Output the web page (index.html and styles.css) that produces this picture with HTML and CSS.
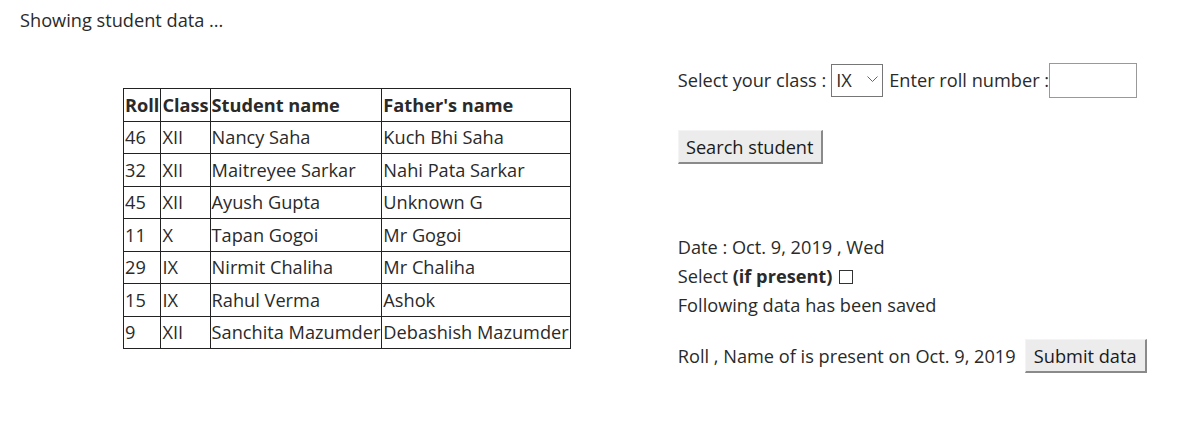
FILE: index.html
```html
<!DOCTYPE html>
<html>
<head>
<meta charset="utf-8">
<link rel="stylesheet" href="styles.css">
</head>
<body>
<p class="intro">Showing student data ...</p>
<div class="main">
  <table class="students">
    <thead>
      <tr><th>Roll</th><th>Class</th><th>Student name</th><th>Father's name</th></tr>
    </thead>
    <tbody>
      <tr><td>46</td><td>XII</td><td>Nancy Saha</td><td>Kuch Bhi Saha</td></tr>
      <tr><td>32</td><td>XII</td><td>Maitreyee Sarkar</td><td>Nahi Pata Sarkar</td></tr>
      <tr><td>45</td><td>XII</td><td>Ayush Gupta</td><td>Unknown G</td></tr>
      <tr><td>11</td><td>X</td><td>Tapan Gogoi</td><td>Mr Gogoi</td></tr>
      <tr><td>29</td><td>IX</td><td>Nirmit Chaliha</td><td>Mr Chaliha</td></tr>
      <tr><td>15</td><td>IX</td><td>Rahul Verma</td><td>Ashok</td></tr>
      <tr><td>9</td><td>XII</td><td>Sanchita Mazumder</td><td>Debashish Mazumder</td></tr>
    </tbody>
  </table>
  <div class="side">
    <div class="search-row">
      <span class="lbl">Select your class :</span>
      <span class="select-wrap">
        <select class="class-select"><option>IX</option><option>X</option><option>XII</option></select>
        <svg class="chev" width="11" height="6" viewBox="0 0 11 6"><path d="M0.5 0.5 L5.5 5.5 L10.5 0.5" fill="none" stroke="#666" stroke-width="1"/></svg>
      </span>
      <span class="lbl roll-lbl">Enter roll number :</span><input class="roll-input" type="text">
    </div>
    <button class="btn search-btn">Search student</button>
    <div class="attendance">
      <div class="line">Date : Oct. 9, 2019 , Wed</div>
      <div class="line">Select <b>(if present)</b> <span class="box"></span></div>
      <div class="line">Following data has been saved</div>
      <div class="submit-row">
        <span>Roll , Name of is present on Oct. 9, 2019</span>
        <button class="btn submit-btn">Submit data</button>
      </div>
    </div>
  </div>
</div>
</body>
</html>
```
FILE: styles.css
```css
html, body {
  margin: 0;
  padding: 0;
  background: #ffffff;
}
body {
  font-family: "Open Sans", "Noto Sans", sans-serif;
  font-size: 18.2px;
  color: #2a2a2a;
}
.intro {
  margin: 0;
  padding: 8px 0 0 20px;
  line-height: 24px;
}
.main {
  display: flex;
  align-items: flex-start;
  margin-top: 30px;
}
.students {
  margin: 26px 0 0 123px;
  border-collapse: collapse;
  border: 1px solid #222;
}
.students th,
.students td {
  border: 1px solid #222;
  padding: 0 1px;
  height: 31.5px;
  text-align: left;
  white-space: nowrap;
  line-height: 22px;
}
.students th {
  font-weight: bold;
}
.side {
  margin-left: 107px;
}
.search-row {
  display: flex;
  align-items: center;
  height: 36px;
}
.select-wrap {
  position: relative;
  display: inline-block;
  margin: 0 6px 0 5px;
}
.class-select {
  appearance: none;
  -webkit-appearance: none;
  font: inherit;
  color: #2a2a2a;
  width: 52px;
  height: 33px;
  border: 1px solid #767676;
  border-radius: 0;
  background: #fff;
  padding: 0 0 0 4px;
  margin: 0;
  display: block;
}
.chev {
  position: absolute;
  right: 5px;
  top: 12px;
  pointer-events: none;
}
.roll-input {
  width: 88px;
  height: 35px;
  box-sizing: border-box;
  border: 1px solid #999;
  margin: 0;
  padding: 0;
}
.btn {
  font: inherit;
  color: #1a1a1a;
  background: #ececec;
  border-style: solid;
  border-width: 1px 2px 2px 1px;
  border-color: #f4f4f4 #8a8a8a #8a8a8a #f4f4f4;
  padding: 0 7px;
  height: 34px;
  margin: 0;
}
.search-btn {
  margin-top: 32px;
  width: 145px;
}
.attendance {
  margin-top: 69px;
}
.line {
  line-height: 29px;
}
.box {
  display: inline-block;
  width: 12px;
  height: 12px;
  border: 1px solid #333;
  vertical-align: -1px;
  margin-left: 2px;
}
.submit-row {
  display: flex;
  align-items: center;
  gap: 9px;
  margin-top: 19px;
}
.submit-btn {
  width: 122px;
}
```
